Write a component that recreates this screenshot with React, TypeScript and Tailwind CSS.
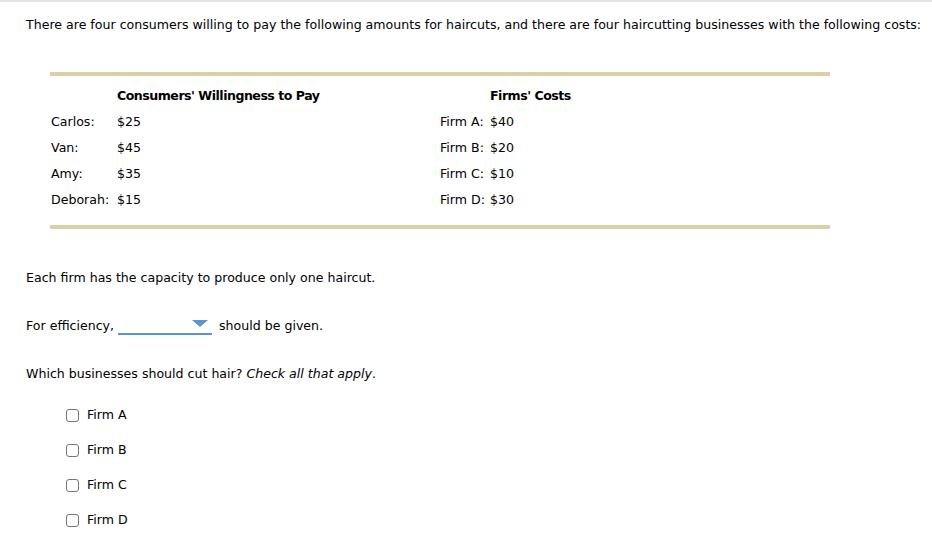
export default function App() {
  const consumers = [
    ["Carlos:", "$25"],
    ["Van:", "$45"],
    ["Amy:", "$35"],
    ["Deborah:", "$15"],
  ];
  const firms = [
    ["Firm A:", "$40"],
    ["Firm B:", "$20"],
    ["Firm C:", "$10"],
    ["Firm D:", "$30"],
  ];

  return (
    <div className="w-[932px] h-[545px] bg-white border-t-2 border-[#e3e3e3] text-[12.58px] text-black font-['DejaVu_Sans',Verdana,sans-serif] overflow-hidden">
      <p className="pl-[26px] pt-[15px] leading-[16px]">
        There are four consumers willing to pay the following amounts for haircuts, and there are four haircutting businesses with the following costs:
      </p>

      <div className="ml-[50px] mt-[39px] w-[780px] border-t-4 border-b-4 border-[#dacfa5] pt-[12px] pb-[7px] flex">
        <div className="w-[390px]">
          <div className="pl-[67px] font-bold tracking-[-0.5px] leading-[16px] h-[26px]">Consumers' Willingness to Pay</div>
          {consumers.map(([name, amt]) => (
            <div key={name} className="flex h-[26px] leading-[16px]">
              <span className="w-[67px] pl-px">{name}</span>
              <span>{amt}</span>
            </div>
          ))}
        </div>
        <div>
          <div className="pl-[50px] font-bold tracking-[-0.5px] leading-[16px] h-[26px]">Firms' Costs</div>
          {firms.map(([name, amt]) => (
            <div key={name} className="flex h-[26px] leading-[16px]">
              <span className="w-[50px]">{name}</span>
              <span>{amt}</span>
            </div>
          ))}
        </div>
      </div>

      <p className="pl-[26px] mt-[41px] leading-[16px]">Each firm has the capacity to produce only one haircut.</p>

      <div className="pl-[26px] mt-[31px] flex items-center leading-[16px]">
        <span>For efficiency,</span>
        <span className="ml-[4px] w-[94px] h-[18px] border-b-2 border-[#5a96cc] flex justify-end items-start pr-[4px] pt-[3px]">
          <svg width="16" height="8" viewBox="0 0 16 8">
            <path d="M0 0 H16 L8 7 Z" fill="#5a96cc" />
          </svg>
        </span>
        <span className="ml-[7px]">should be given.</span>
      </div>

      <p className="pl-[26px] mt-[31px] leading-[16px]">
        Which businesses should cut hair? <i>Check all that apply</i>.
      </p>

      <div className="pl-[66px] mt-[25px] flex flex-col gap-[19px]">
        {["Firm A", "Firm B", "Firm C", "Firm D"].map((f) => (
          <label key={f} className="flex items-center gap-[8px] h-[16px] leading-[16px]">
            <span className="w-[13px] h-[13px] border border-[#767676] rounded-[3px] bg-white" />
            <span>{f}</span>
          </label>
        ))}
      </div>
    </div>
  );
}
